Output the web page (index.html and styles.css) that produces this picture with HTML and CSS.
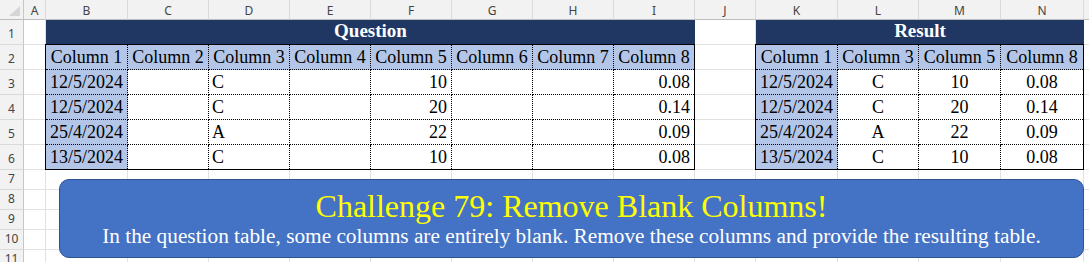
FILE: index.html
```html
<!DOCTYPE html>
<html lang="en">
<head>
<meta charset="utf-8">
<title>Challenge 79</title>
<link rel="stylesheet" href="styles.css">
</head>
<body>
<div class="sheet">
  <div class="corner"><svg width="24" height="20" viewBox="0 0 24 20"><polygon points="20,6 20,16 9,16" fill="#d6d6d6"/></svg></div>
  <div class="ch">A</div><div class="ch">B</div><div class="ch">C</div><div class="ch">D</div><div class="ch">E</div><div class="ch">F</div><div class="ch">G</div><div class="ch">H</div><div class="ch">I</div><div class="ch">J</div><div class="ch">K</div><div class="ch">L</div><div class="ch">M</div><div class="ch">N</div><div class="ch ch-rest"></div>
  <div class="rh">1</div><div class="rh">2</div><div class="rh">3</div><div class="rh">4</div><div class="rh">5</div><div class="rh">6</div><div class="rh">7</div><div class="rh">8</div><div class="rh">9</div><div class="rh">10</div><div class="rh">11</div>

  <div class="band q-band">Question</div>
  <div class="tbl q-tbl">
    <div class="cell h">Column 1</div><div class="cell h">Column 2</div><div class="cell h">Column 3</div><div class="cell h">Column 4</div><div class="cell h">Column 5</div><div class="cell h">Column 6</div><div class="cell h">Column 7</div><div class="cell h">Column 8</div>
    <div class="cell d">12/5/2024</div><div class="cell"></div><div class="cell l">C</div><div class="cell"></div><div class="cell r">10</div><div class="cell"></div><div class="cell"></div><div class="cell r">0.08</div>
    <div class="cell d">12/5/2024</div><div class="cell"></div><div class="cell l">C</div><div class="cell"></div><div class="cell r">20</div><div class="cell"></div><div class="cell"></div><div class="cell r">0.14</div>
    <div class="cell d">25/4/2024</div><div class="cell"></div><div class="cell l">A</div><div class="cell"></div><div class="cell r">22</div><div class="cell"></div><div class="cell"></div><div class="cell r">0.09</div>
    <div class="cell d">13/5/2024</div><div class="cell"></div><div class="cell l">C</div><div class="cell"></div><div class="cell r">10</div><div class="cell"></div><div class="cell"></div><div class="cell r">0.08</div>
  </div>

  <div class="band r-band">Result</div>
  <div class="tbl r-tbl">
    <div class="cell h">Column 1</div><div class="cell h">Column 3</div><div class="cell h">Column 5</div><div class="cell h">Column 8</div>
    <div class="cell d">12/5/2024</div><div class="cell">C</div><div class="cell">10</div><div class="cell">0.08</div>
    <div class="cell d">12/5/2024</div><div class="cell">C</div><div class="cell">20</div><div class="cell">0.14</div>
    <div class="cell d">25/4/2024</div><div class="cell">A</div><div class="cell">22</div><div class="cell">0.09</div>
    <div class="cell d">13/5/2024</div><div class="cell">C</div><div class="cell">10</div><div class="cell">0.08</div>
  </div>

  <div class="banner">
    <div class="banner-title">Challenge 79: Remove Blank Columns!</div>
    <div class="banner-sub">In the question table, some columns are entirely blank. Remove these columns and provide the resulting table.</div>
  </div>
</div>
</body>
</html>
```

FILE: styles.css
```css
* { box-sizing: border-box; }

html, body {
  margin: 0;
  background: #ffffff;
  overflow: hidden;
}

.sheet {
  --g: linear-gradient(#e1e1e1, #e1e1e1);
  position: relative;
  display: grid;
  grid-template-columns: 24px 22px 82px repeat(7, 81px) 61px 82px 81px 82px 83px 1fr;
  grid-template-rows: 20px repeat(6, 25px) repeat(5, 20px);
  width: 1089px;
  height: 262px;
  overflow: hidden;
  background-color: #ffffff;
  background-repeat: no-repeat;
  background-image:
    var(--g), var(--g), var(--g), var(--g), var(--g), var(--g), var(--g),
    var(--g), var(--g), var(--g), var(--g), var(--g), var(--g), var(--g),
    var(--g), var(--g), var(--g), var(--g), var(--g), var(--g), var(--g),
    var(--g), var(--g), var(--g), var(--g);
  background-size:
    1px 100%, 1px 100%, 1px 100%, 1px 100%, 1px 100%, 1px 100%, 1px 100%,
    1px 100%, 1px 100%, 1px 100%, 1px 100%, 1px 100%, 1px 100%, 1px 100%,
    100% 1px, 100% 1px, 100% 1px, 100% 1px, 100% 1px, 100% 1px, 100% 1px,
    100% 1px, 100% 1px, 100% 1px, 100% 1px;
  background-position:
    45px 0, 127px 0, 208px 0, 289px 0, 370px 0, 451px 0, 532px 0,
    613px 0, 694px 0, 755px 0, 837px 0, 918px 0, 1000px 0, 1083px 0,
    0 44px, 0 69px, 0 94px, 0 119px, 0 144px, 0 169px, 0 189px,
    0 209px, 0 229px, 0 249px, 0 269px;
  font-family: "Liberation Serif", "Times New Roman", serif;
}

/* headers */
.corner {
  background: #f2f2f2;
  border-right: 1px solid #c6c6c6;
  border-bottom: 1px solid #bdbdbd;
}
.corner svg { display: block; }

.ch {
  display: flex;
  align-items: center;
  justify-content: center;
  background: #f2f2f2;
  border-right: 1px solid #dadada;
  border-bottom: 1px solid #bdbdbd;
  font-family: "Noto Sans", "Open Sans", sans-serif;
  font-size: 12px;
  color: #444444;
  padding-top: 1px;
}
.ch-rest { border-right: none; }

.rh {
  grid-column: 1;
  display: flex;
  align-items: flex-end;
  justify-content: center;
  background: #f2f2f2;
  border-right: 1px solid #c6c6c6;
  border-bottom: 1px solid #dadada;
  font-family: "Noto Sans", "Open Sans", sans-serif;
  font-size: 12px;
  line-height: 16px;
  color: #444444;
  padding-bottom: 2px;
}

/* table title bands */
.band {
  grid-row: 2;
  display: flex;
  align-items: flex-end;
  justify-content: center;
  background: #203764;
  color: #ffffff;
  font-weight: bold;
  font-size: 19px;
  line-height: 20px;
  padding-bottom: 4px;
}
.q-band { grid-column: 3 / 11; }
.r-band { grid-column: 12 / 16; }

/* tables */
.tbl {
  grid-row: 3 / 8;
  display: grid;
  grid-template-rows: repeat(4, 25px) 1fr;
  margin: -1px 0 0 -1px;
  border: 1px solid #000000;
  background: #ffffff;
  font-size: 18px;
  line-height: 20px;
  color: #000000;
}
.q-tbl {
  grid-column: 3 / 11;
  grid-template-columns: 82px repeat(6, 81px) 1fr;
}
.r-tbl {
  grid-column: 12 / 16;
  grid-template-columns: 82px 81px 82px 1fr;
}

.cell {
  display: flex;
  align-items: flex-end;
  justify-content: center;
  padding: 0 4px 2px;
  border-right: 1px dotted #000000;
  border-bottom: 1px dotted #000000;
  white-space: nowrap;
}
.q-tbl .cell:nth-child(8n) { border-right: none; }
.q-tbl .cell:nth-last-child(-n+8) { border-bottom: none; }
.r-tbl .cell:nth-child(4n) { border-right: none; }
.r-tbl .cell:nth-last-child(-n+4) { border-bottom: none; }

.cell.h, .cell.d { background: #b4c6e7; }
.cell.l { justify-content: flex-start; padding-left: 3px; }
.cell.r { justify-content: flex-end; padding-right: 4px; }

/* floating shape */
.banner {
  position: absolute;
  left: 59px;
  top: 179px;
  width: 1025px;
  height: 79px;
  display: flex;
  flex-direction: column;
  align-items: center;
  padding-top: 8px;
  background: #4472c4;
  border: 1px solid #2f528f;
  border-radius: 10px;
  white-space: nowrap;
}
.banner-title {
  font-size: 32px;
  line-height: 36px;
  color: #ffff00;
}
.banner-sub {
  font-size: 21.3px;
  line-height: 24px;
  color: #ffffff;
}
```
